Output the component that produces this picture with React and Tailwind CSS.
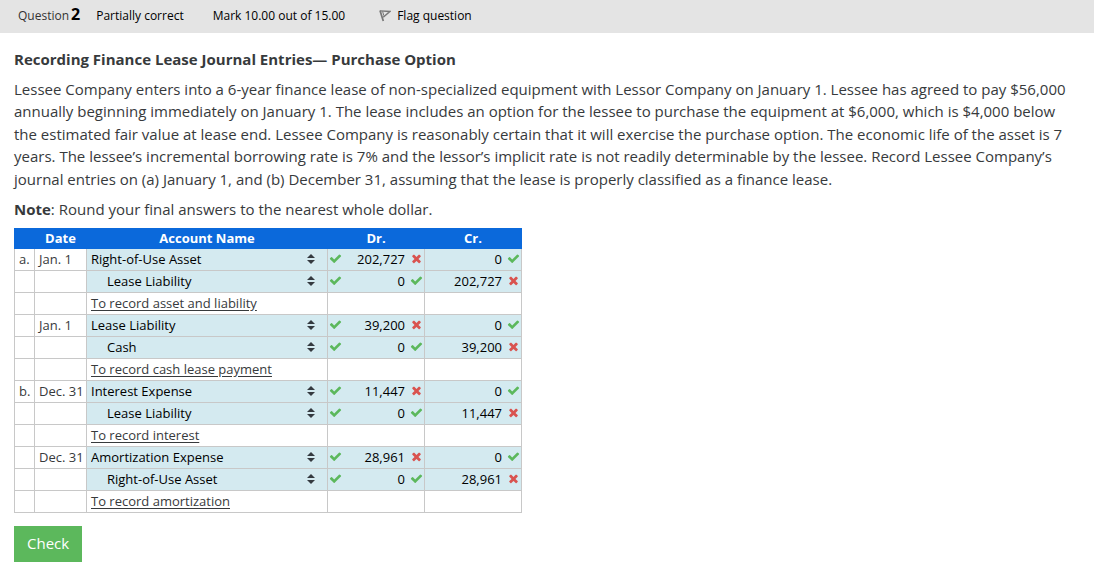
import React from "react";

const ENTRIES = [
  { part: "a.", date: "Jan. 1", account: "Right-of-Use Asset", dr: "202,727", drOk: false, cr: "0", crOk: true },
  { account: "Lease Liability", indent: true, dr: "0", drOk: true, cr: "202,727", crOk: false },
  { note: "To record asset and liability" },
  { date: "Jan. 1", account: "Lease Liability", dr: "39,200", drOk: false, cr: "0", crOk: true },
  { account: "Cash", indent: true, dr: "0", drOk: true, cr: "39,200", crOk: false },
  { note: "To record cash lease payment" },
  { part: "b.", date: "Dec. 31", account: "Interest Expense", dr: "11,447", drOk: false, cr: "0", crOk: true },
  { account: "Lease Liability", indent: true, dr: "0", drOk: true, cr: "11,447", crOk: false },
  { note: "To record interest" },
  { date: "Dec. 31", account: "Amortization Expense", dr: "28,961", drOk: false, cr: "0", crOk: true },
  { account: "Right-of-Use Asset", indent: true, dr: "0", drOk: true, cr: "28,961", crOk: false },
  { note: "To record amortization" },
];

const ACCOUNTS = [
  "Right-of-Use Asset",
  "Lease Liability",
  "Cash",
  "Interest Expense",
  "Amortization Expense",
];

function Mark({ ok }) {
  return ok ? (
    <svg viewBox="0 0 1792 1792" className="size-[13px] shrink-0 fill-[#5cb85c]" role="img" aria-label="Correct">
      <path d="M1671 566q0 40-28 68l-724 724-136 136q-28 28-68 28t-68-28l-136-136-362-362q-28-28-28-68t28-68l136-136q28-28 68-28t68 28l294 295 656-657q28-28 68-28t68 28l136 136q28 28 28 68z" />
    </svg>
  ) : (
    <svg viewBox="0 0 1792 1792" className="size-[13px] shrink-0 fill-[#d9534f]" role="img" aria-label="Incorrect">
      <path d="M1490 1322q0 40-28 68l-136 136q-28 28-68 28t-68-28l-294-294-294 294q-28 28-68 28t-68-28l-136-136q-28-28-28-68t28-68l294-294-294-294q-28-28-28-68t28-68l136-136q28-28 68-28t68 28l294 294 294-294q28-28 68-28t68 28l136 136q28 28 28 68t-28 68l-294 294 294 294q28 28 28 68z" />
    </svg>
  );
}

function FlagIcon() {
  return (
    <svg viewBox="0 0 12 13" className="h-[13px] w-3 shrink-0" fill="none" stroke="#777" aria-hidden="true">
      <path d="M1 1.5L4.3 12" strokeWidth="1.7" />
      <path d="M1.2 1.9L10.8 2.5L4.2 8.2" strokeWidth="1.4" />
      <path d="M3.6 2.4L4.8 6.6" strokeWidth="1" />
    </svg>
  );
}

function AccountSelect({ value, indent, label }) {
  return (
    <div className="grid items-center">
      <select
        aria-label={label}
        defaultValue={value}
        className={`col-start-1 row-start-1 h-5 w-full appearance-none bg-transparent pr-6 text-black ${indent ? "pl-5" : "pl-1"}`}
      >
        {ACCOUNTS.map((name) => (
          <option key={name}>{name}</option>
        ))}
      </select>
      <svg
        viewBox="0 0 4 5"
        className="pointer-events-none col-start-1 row-start-1 mr-3 h-2.5 w-2 justify-self-end fill-[#343a40]"
        aria-hidden="true"
      >
        <path d="M2 0L0 2h4zm0 5L0 3h4z" />
      </svg>
    </div>
  );
}

function Amount({ value, ok, label }) {
  return (
    <div className="flex min-w-0 flex-1 items-center gap-[5px] pr-px">
      <input
        type="text"
        aria-label={label}
        defaultValue={value}
        className="h-5 w-0 min-w-0 flex-1 bg-transparent text-right text-black"
      />
      <Mark ok={ok} />
    </div>
  );
}

function EntryRow({ entry, index }) {
  const cell = "h-[22px] border border-[#c8c8c8] p-0 align-top";
  if (entry.note) {
    return (
      <tr>
        <td className={cell} />
        <td className={cell} />
        <td className={`${cell} pl-1 underline underline-offset-2`}>{entry.note}</td>
        <td className={cell} />
        <td className={cell} />
      </tr>
    );
  }
  const row = `row ${index + 1}`;
  return (
    <tr>
      <td className={`${cell} pl-1`}>{entry.part}</td>
      <td className={`${cell} pl-1`}>{entry.date}</td>
      <td className={`${cell} bg-[#d4eaf0]`}>
        <AccountSelect value={entry.account} indent={entry.indent} label={`Account name, ${row}`} />
      </td>
      <td className={`${cell} bg-[#d4eaf0]`}>
        <div className="flex items-center pl-px">
          <Mark ok />
          <Amount value={entry.dr} ok={entry.drOk} label={`Debit, ${row}`} />
        </div>
      </td>
      <td className={`${cell} bg-[#d4eaf0]`}>
        <div className="flex items-center">
          <Amount value={entry.cr} ok={entry.crOk} label={`Credit, ${row}`} />
        </div>
      </td>
    </tr>
  );
}

export default function App() {
  const head = "border border-[#0b69db] p-0 font-bold";
  return (
    <div className="bg-white font-['Open_Sans',sans-serif] text-[15px] leading-normal text-[#373a3c]">
      <header className="flex h-[33px] items-center bg-[#e4e4e4] px-[18px] pb-0.5 text-xs text-black">
        <h3 className="flex items-baseline gap-0.5 pb-1 text-[#333]">
          Question <span className="text-base font-bold text-black">2</span>
        </h3>
        <span className="ml-4">Partially correct</span>
        <span className="ml-[29px]">Mark 10.00 out of 15.00</span>
        <a href="#flag" className="ml-[34px] flex items-center gap-1.5">
          <FlagIcon />
          Flag question
        </a>
      </header>

      <main className="px-3.5 pt-[15px] pb-3.5">
        <h4 className="font-bold">Recording Finance Lease Journal Entries— Purchase Option</h4>
        <p className="mt-[7px]">
          Lessee Company enters into a 6-year finance lease of non-specialized equipment with Lessor Company on
          January 1. Lessee has agreed to pay $56,000 annually beginning immediately on January 1. The lease includes
          an option for the lessee to purchase the equipment at $6,000, which is $4,000 below the estimated fair value
          at lease end. Lessee Company is reasonably certain that it will exercise the purchase option. The economic
          life of the asset is 7 years. The lessee’s incremental borrowing rate is 7% and the lessor’s implicit rate is
          not readily determinable by the lessee. Record Lessee Company’s journal entries on (a) January 1, and (b)
          December 31, assuming that the lease is properly classified as a finance lease.
        </p>
        <p className="mt-2">
          <b>Note</b>: Round your final answers to the nearest whole dollar.
        </p>

        <table className="mt-[7px] w-[508px] table-fixed border-collapse text-[13px] leading-5">
          <colgroup>
            <col className="w-5" />
            <col className="w-[52px]" />
            <col />
            <col className="w-[97px]" />
            <col className="w-[97px]" />
          </colgroup>
          <thead>
            <tr className="h-5 bg-[#0b69db] text-center leading-[19px] text-white">
              <td className={head} />
              <th scope="col" className={head}>Date</th>
              <th scope="col" className={head}>Account Name</th>
              <th scope="col" className={head}>Dr.</th>
              <th scope="col" className={head}>Cr.</th>
            </tr>
          </thead>
          <tbody>
            {ENTRIES.map((entry, i) => (
              <EntryRow key={i} entry={entry} index={i} />
            ))}
          </tbody>
        </table>

        <button type="button" className="mt-[13px] h-9 bg-[#5cb85c] px-[13px] text-white">
          Check
        </button>
      </main>
    </div>
  );
}
